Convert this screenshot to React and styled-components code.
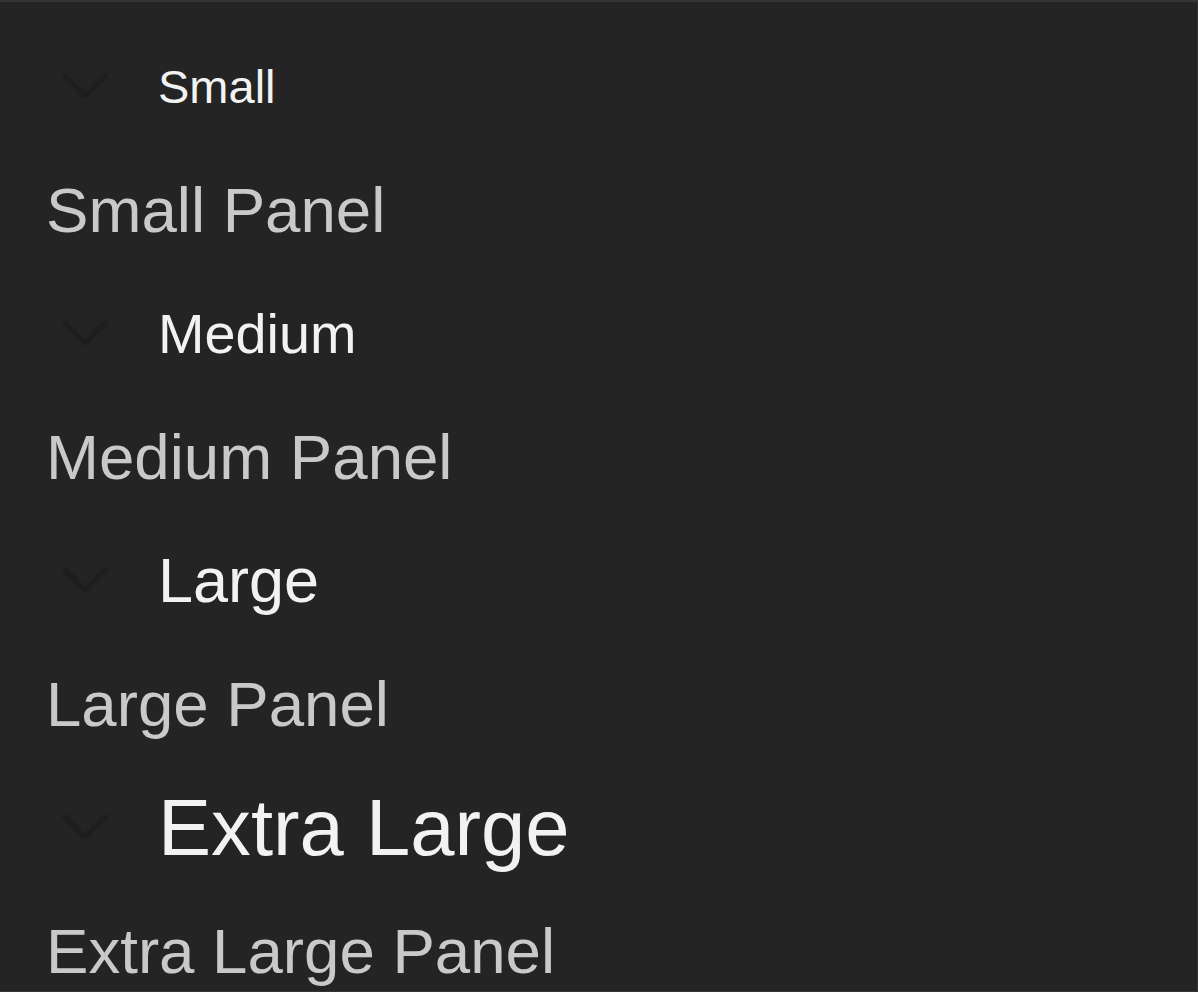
import React from "react";
import styled, { createGlobalStyle } from "styled-components";

const GlobalStyle = createGlobalStyle`
  html, body {
    margin: 0;
    padding: 0;
    background: #242424;
  }
  body {
    font-family: "Liberation Sans", Arial, sans-serif;
  }
`;

const sections = [
	{ title: "Small", size: 47, panel: "Small Panel" },
	{ title: "Medium", size: 55.8, panel: "Medium Panel" },
	{ title: "Large", size: 63, panel: "Large Panel" },
	{ title: "Extra Large", size: 79.6, panel: "Extra Large Panel" },
];

export default function App() {
	return (
		<>
			<GlobalStyle />
			<Frame>
				{sections.map(s => (
					<Item key={s.title}>
						<Header $size={s.size} type="button">
							<Chevron viewBox="0 0 48 28" aria-hidden="true">
								<polyline points="3,3 24,24 45,3" />
							</Chevron>
							<span>{s.title}</span>
						</Header>
						<Panel>{s.panel}</Panel>
					</Item>
				))}
			</Frame>
		</>
	);
}

const Frame = styled.div`
	box-sizing: border-box;
	width: 1198px;
	height: 992px;
	background: #242424;
	border-top: 2px solid #343434;
	border-right: 1px solid #343434;
	border-bottom: 1px solid #343434;
	padding-top: 23px;
	overflow: hidden;
`;

const Item = styled.section`
	display: flex;
	flex-direction: column;
`;

const Header = styled.button`
	box-sizing: border-box;
	display: flex;
	align-items: center;
	gap: 50px;
	width: 100%;
	height: 123px;
	padding: 0 0 0 62px;
	margin: 0;
	background: none;
	border: 0;
	color: #f2f2f2;
	font-family: inherit;
	font-size: ${p => p.$size}px;
	line-height: 1;
	text-align: left;
	cursor: pointer;
`;

const Chevron = styled.svg`
	flex: none;
	width: 46px;
	height: 27px;
	fill: none;
	stroke: #1d1d1d;
	stroke-width: 5;
	stroke-linecap: round;
	stroke-linejoin: round;
	filter: blur(1px);
`;

const Panel = styled.div`
	box-sizing: border-box;
	display: flex;
	align-items: center;
	height: 124px;
	padding-left: 46px;
	color: #c9c9c9;
	font-size: 63.6px;
	line-height: 1;
`;
